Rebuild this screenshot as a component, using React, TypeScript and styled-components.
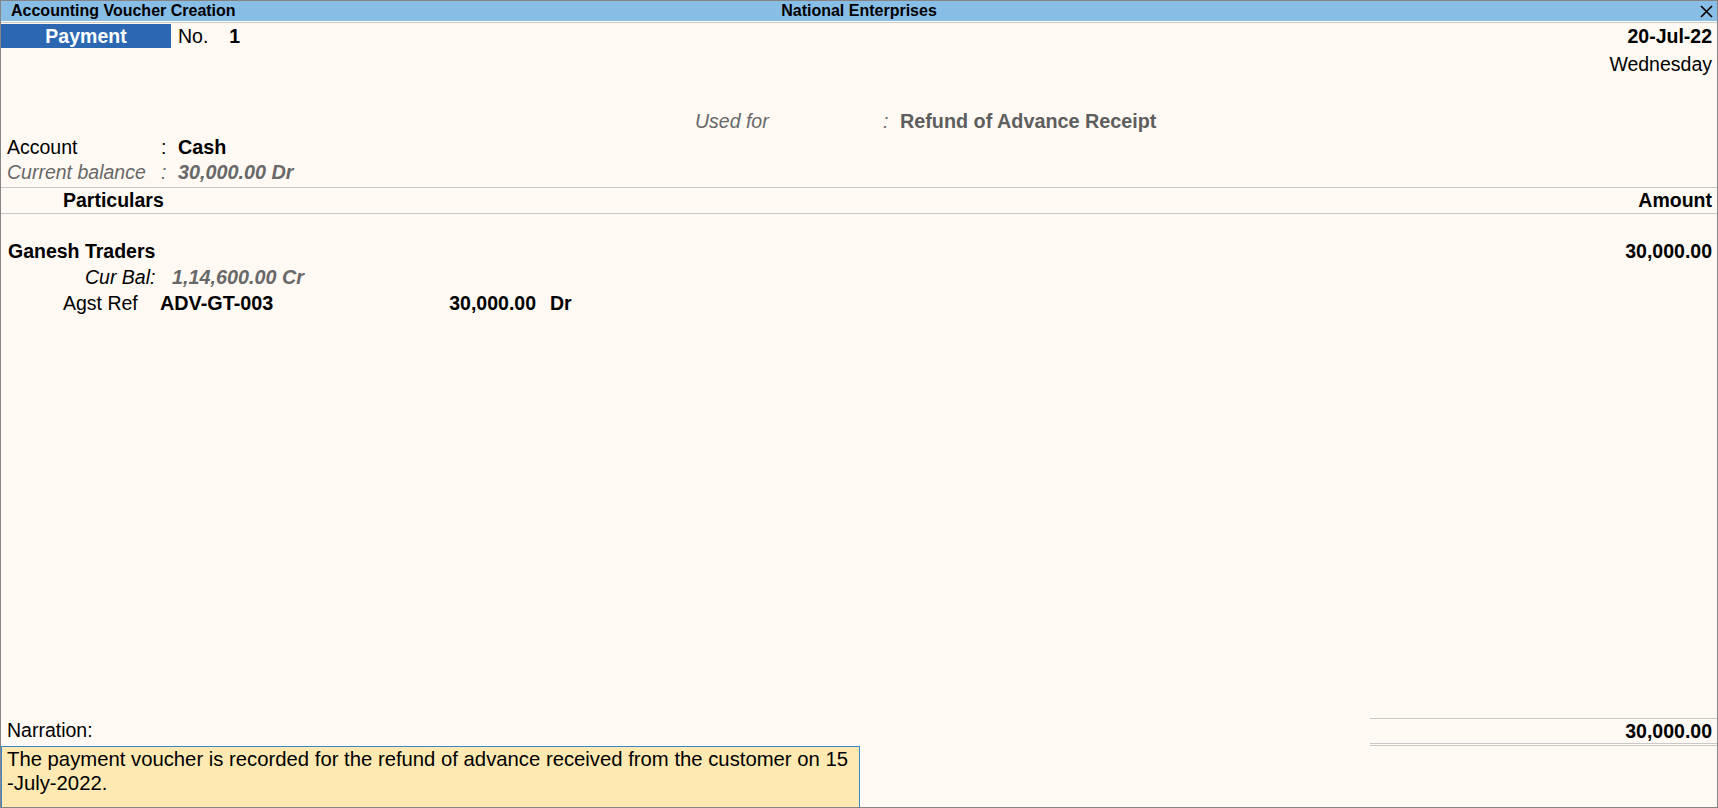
import styled, { createGlobalStyle } from 'styled-components'

const GlobalStyle = createGlobalStyle`
  html, body {
    margin: 0;
    padding: 0;
    background: #fef9f3;
  }
  * {
    box-sizing: border-box;
  }
  body {
    font-family: "Liberation Sans", Arial, sans-serif;
    font-size: 19.5px;
    color: #000;
  }
`

const Window = styled.div`
  height: 100vh;
  display: flex;
  flex-direction: column;
  border: 1px solid #858585;
  background: #fef9f3;
  overflow: hidden;
`

const TitleBar = styled.div`
  height: 21px;
  display: grid;
  grid-template-columns: 1fr auto 1fr;
  align-items: center;
  background: #88bde6;
  border-bottom: 1px solid #ffffff;
  font-size: 16px;
  font-weight: bold;
  line-height: 20px;
`

const TitleText = styled.span`
  padding-left: 10px;
`

const CloseButton = styled.span`
  justify-self: end;
  display: flex;
  align-items: center;
  padding-right: 4px;
`

const Body = styled.div`
  flex: 1;
  display: flex;
  flex-direction: column;
  border-top: 1px solid #c9c9c9;
  padding-top: 1px;
`

const TopRow = styled.div`
  height: 24px;
  display: flex;
  align-items: center;
`

const VoucherType = styled.div`
  width: 170px;
  height: 24px;
  background: #2c68b2;
  color: #fff;
  font-weight: bold;
  display: flex;
  align-items: center;
  justify-content: center;
`

const NoLabel = styled.span`
  margin-left: 7px;
`

const NoValue = styled.span`
  margin-left: 21px;
  font-weight: bold;
`

const DateText = styled.span`
  margin-left: auto;
  padding-right: 5px;
  font-weight: bold;
`

const DayRow = styled.div`
  height: 24px;
  margin-top: 4px;
  display: flex;
  align-items: center;
  justify-content: flex-end;
  padding-right: 5px;
`

const UsedRow = styled.div`
  height: 24px;
  margin-top: 33px;
  display: grid;
  grid-template-columns: 188px 17px auto;
  align-items: center;
  padding-left: 694px;
  color: #686868;
`

const FieldRow = styled.div`
  height: 25px;
  display: grid;
  grid-template-columns: 154px 17px auto;
  align-items: center;
  padding-left: 6px;
`

const Label = styled.span<{ $muted?: boolean }>`
  font-style: ${p => (p.$muted ? 'italic' : 'normal')};
  color: ${p => (p.$muted ? '#686868' : '#000')};
`

const Value = styled.span<{ $tone?: 'plain' | 'muted' | 'grey' }>`
  font-weight: bold;
  font-size: 19.8px;
  font-style: ${p => (p.$tone === 'muted' ? 'italic' : 'normal')};
  color: ${p => (p.$tone === 'muted' ? '#686868' : p.$tone === 'grey' ? '#5e5e5e' : '#000')};
`

const Colon = styled.span<{ $italic?: boolean }>`
  font-style: ${p => (p.$italic ? 'italic' : 'normal')};
`

const AccountBlock = styled.div`
  margin-top: 2px;
`

const TableHead = styled.div`
  margin-top: 2px;
  height: 27px;
  display: flex;
  align-items: center;
  justify-content: space-between;
  border-top: 1px solid #c8c8c8;
  border-bottom: 1px solid #c8c8c8;
  padding: 0 5px 0 62px;
  font-weight: bold;
`

const Entries = styled.div`
  margin-top: 24px;
  display: flex;
  flex-direction: column;
`

const LedgerRow = styled.div`
  height: 26px;
  display: flex;
  align-items: center;
  justify-content: space-between;
  padding: 0 5px 0 7px;
  font-weight: bold;
`

const BalanceRow = styled.div`
  height: 26px;
  display: flex;
  align-items: center;
  padding-left: 84px;
`

const BalLabel = styled.span`
  font-style: italic;
  width: 87px;
`

const BalValue = styled.span`
  font-style: italic;
  font-weight: bold;
  font-size: 19.8px;
  color: #686868;
`

const BillRow = styled.div`
  height: 26px;
  display: grid;
  grid-template-columns: 97px 190px 186px auto;
  align-items: center;
  padding-left: 62px;
`

const BillAmount = styled.span`
  font-weight: bold;
  text-align: right;
`

const BillSide = styled.span`
  font-weight: bold;
  padding-left: 14px;
`

const Spacer = styled.div`
  flex: 1;
`

const Footer = styled.div`
  display: grid;
  grid-template-columns: 859px 1fr 347px;
  grid-template-rows: 28px 61px;
`

const NarrationLabel = styled.div`
  grid-column: 1;
  grid-row: 1;
  height: 25px;
  display: flex;
  align-items: center;
  padding-left: 6px;
`

const TotalCell = styled.div`
  grid-column: 3;
  grid-row: 1;
  border-top: 1px solid #c8c8c8;
  border-bottom: 3px double #c8c8c8;
  display: flex;
  align-items: center;
  justify-content: flex-end;
  padding-right: 5px;
  font-weight: bold;
`

const NarrationBox = styled.div`
  grid-column: 1;
  grid-row: 2;
  background: #fde9b1;
  border: 1px solid #3a88cc;
  border-bottom: none;
  padding: 0 5px;
  font-size: 20.3px;
  line-height: 24px;
`

const CloseIcon = () => (
  <svg width="13" height="13" viewBox="0 0 13 13">
    <path d="M1 1 L12 12 M12 1 L1 12" stroke="#000" strokeWidth="1.6" fill="none" />
  </svg>
)

export default function App() {
  return (
    <>
      <GlobalStyle />
      <Window>
        <TitleBar>
          <TitleText>Accounting Voucher Creation</TitleText>
          <span>National Enterprises</span>
          <CloseButton>
            <CloseIcon />
          </CloseButton>
        </TitleBar>
        <Body>
          <TopRow>
            <VoucherType>Payment</VoucherType>
            <NoLabel>No.</NoLabel>
            <NoValue>1</NoValue>
            <DateText>20-Jul-22</DateText>
          </TopRow>
          <DayRow>Wednesday</DayRow>

          <UsedRow>
            <Label $muted>Used for</Label>
            <Colon $italic>:</Colon>
            <Value $tone="grey">Refund of Advance Receipt</Value>
          </UsedRow>

          <AccountBlock>
            <FieldRow>
              <Label>Account</Label>
              <Colon>:</Colon>
              <Value>Cash</Value>
            </FieldRow>
            <FieldRow>
              <Label $muted>Current balance</Label>
              <Label $muted>:</Label>
              <Value $tone="muted">30,000.00 Dr</Value>
            </FieldRow>
          </AccountBlock>

          <TableHead>
            <span>Particulars</span>
            <span>Amount</span>
          </TableHead>

          <Entries>
            <LedgerRow>
              <span>Ganesh Traders</span>
              <span>30,000.00</span>
            </LedgerRow>
            <BalanceRow>
              <BalLabel>Cur Bal:</BalLabel>
              <BalValue>1,14,600.00 Cr</BalValue>
            </BalanceRow>
            <BillRow>
              <span>Agst Ref</span>
              <Value>ADV-GT-003</Value>
              <BillAmount>30,000.00</BillAmount>
              <BillSide>Dr</BillSide>
            </BillRow>
          </Entries>

          <Spacer />

          <Footer>
            <NarrationLabel>Narration:</NarrationLabel>
            <TotalCell>30,000.00</TotalCell>
            <NarrationBox>
              The payment voucher is recorded for the refund of advance received from the customer on 15
              <br />
              -July-2022.
            </NarrationBox>
          </Footer>
        </Body>
      </Window>
    </>
  )
}
